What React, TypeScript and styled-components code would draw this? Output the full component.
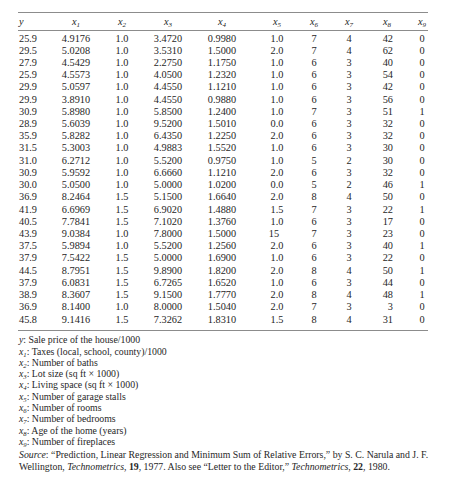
import React from "react";
import styled, { createGlobalStyle } from "styled-components";

const Global = createGlobalStyle`
  html, body { margin: 0; padding: 0; background: #ffffff; }
  body { font-family: "Liberation Serif", "Times New Roman", serif; color: #262626; }
`;

type Align = "start" | "center" | "end";
interface ColSpec { width: number; align: Align; pad?: number; }

const cols: ColSpec[] = [
  { width: 48, align: "start", pad: 1 },
  { width: 20, align: "center" },
  { width: 72, align: "center" },
  { width: 20, align: "center" },
  { width: 88, align: "center" },
  { width: 22, align: "center" },
  { width: 52, align: "center" },
  { width: 18, align: "center" },
  { width: 58, align: "end", pad: 23 },
  { width: 12, align: "center" },
];

const template = cols.map((c) => `${c.width}px`).join(" ");

const rows: string[][] = [
  ["25.9", "4.9176", "1.0", "3.4720", "0.9980", "1.0", "7", "4", "42", "0"],
  ["29.5", "5.0208", "1.0", "3.5310", "1.5000", "2.0", "7", "4", "62", "0"],
  ["27.9", "4.5429", "1.0", "2.2750", "1.1750", "1.0", "6", "3", "40", "0"],
  ["25.9", "4.5573", "1.0", "4.0500", "1.2320", "1.0", "6", "3", "54", "0"],
  ["29.9", "5.0597", "1.0", "4.4550", "1.1210", "1.0", "6", "3", "42", "0"],
  ["29.9", "3.8910", "1.0", "4.4550", "0.9880", "1.0", "6", "3", "56", "0"],
  ["30.9", "5.8980", "1.0", "5.8500", "1.2400", "1.0", "7", "3", "51", "1"],
  ["28.9", "5.6039", "1.0", "9.5200", "1.5010", "0.0", "6", "3", "32", "0"],
  ["35.9", "5.8282", "1.0", "6.4350", "1.2250", "2.0", "6", "3", "32", "0"],
  ["31.5", "5.3003", "1.0", "4.9883", "1.5520", "1.0", "6", "3", "30", "0"],
  ["31.0", "6.2712", "1.0", "5.5200", "0.9750", "1.0", "5", "2", "30", "0"],
  ["30.9", "5.9592", "1.0", "6.6660", "1.1210", "2.0", "6", "3", "32", "0"],
  ["30.0", "5.0500", "1.0", "5.0000", "1.0200", "0.0", "5", "2", "46", "1"],
  ["36.9", "8.2464", "1.5", "5.1500", "1.6640", "2.0", "8", "4", "50", "0"],
  ["41.9", "6.6969", "1.5", "6.9020", "1.4880", "1.5", "7", "3", "22", "1"],
  ["40.5", "7.7841", "1.5", "7.1020", "1.3760", "1.0", "6", "3", "17", "0"],
  ["43.9", "9.0384", "1.0", "7.8000", "1.5000", "15", "7", "3", "23", "0"],
  ["37.5", "5.9894", "1.0", "5.5200", "1.2560", "2.0", "6", "3", "40", "1"],
  ["37.9", "7.5422", "1.5", "5.0000", "1.6900", "1.0", "6", "3", "22", "0"],
  ["44.5", "8.7951", "1.5", "9.8900", "1.8200", "2.0", "8", "4", "50", "1"],
  ["37.9", "6.0831", "1.5", "6.7265", "1.6520", "1.0", "6", "3", "44", "0"],
  ["38.9", "8.3607", "1.5", "9.1500", "1.7770", "2.0", "8", "4", "48", "1"],
  ["36.9", "8.1400", "1.0", "8.0000", "1.5040", "2.0", "7", "3", "3", "0"],
  ["45.8", "9.1416", "1.5", "7.3262", "1.8310", "1.5", "8", "4", "31", "0"],
];

const legend: { v: string; sub?: string; text: string }[] = [
  { v: "y", text: "Sale price of the house/1000" },
  { v: "x", sub: "1", text: "Taxes (local, school, county)/1000" },
  { v: "x", sub: "2", text: "Number of baths" },
  { v: "x", sub: "3", text: "Lot size (sq ft \u00d7 1000)" },
  { v: "x", sub: "4", text: "Living space (sq ft \u00d7 1000)" },
  { v: "x", sub: "5", text: "Number of garage stalls" },
  { v: "x", sub: "6", text: "Number of rooms" },
  { v: "x", sub: "7", text: "Number of bedrooms" },
  { v: "x", sub: "8", text: "Age of the home (years)" },
  { v: "x", sub: "9", text: "Number of fireplaces" },
];

const Page = styled.div`
  padding: 12px 0 0 18px;
  width: 410px;
`;

const Table = styled.div`
  width: 410px;
  border-top: 1.5px solid #8c8c8c;
  border-bottom: 1.5px solid #8c8c8c;
`;

const HeaderRow = styled.div`
  display: grid;
  grid-template-columns: ${template};
  height: 17px;
  align-items: center;
  border-bottom: 1.5px solid #8c8c8c;
  font-size: 10.3px;
  font-style: italic;
`;

const Body = styled.div`
  padding: 1.5px 0 4.5px;
`;

const Row = styled.div`
  display: grid;
  grid-template-columns: ${template};
  height: 12.22px;
  line-height: 12.22px;
  font-size: 10.3px;
`;

const Cell = styled.div<{ $align: Align; $pad?: number; $nudge?: number }>`
  display: flex;
  min-width: 0;
  white-space: nowrap;
  justify-content: ${(p) =>
    p.$align === "start" ? "flex-start" : p.$align === "end" ? "flex-end" : "center"};
  padding-left: ${(p) => (p.$align === "start" ? p.$pad ?? 0 : 0)}px;
  padding-right: ${(p) => (p.$align === "end" ? p.$pad ?? 0 : 0)}px;
  margin-left: ${(p) => p.$nudge ?? 0}px;
`;

const Sub = styled.sub`
  font-size: 0.68em;
  vertical-align: -0.3em;
  line-height: 0;
  font-style: italic;
`;

const Var = styled.span`
  font-style: italic;
`;

const Legend = styled.div`
  padding-top: 3px;
  padding-left: 1px;
  font-size: 9.8px;
  line-height: 11.3px;
`;

const LegendLine = styled.div`
  white-space: nowrap;
`;

const Source = styled.div`
  margin-top: 1.8px;
  font-size: 9.8px;
  line-height: 11.6px;
  padding-left: 1px;
  width: 409px;
`;

const SourceLine = styled.div<{ $justify?: boolean }>`
  text-align: ${(p) => (p.$justify ? "justify" : "left")};
  text-align-last: ${(p) => (p.$justify ? "justify" : "left")};
  white-space: nowrap;
`;

const Bold = styled.b`
  font-weight: bold;
`;

export default function App() {
  return (
    <>
      <Global />
      <Page>
        <Table>
          <HeaderRow>
            {cols.map((c, i) => (
              <Cell key={i} $align={c.align === "end" ? "center" : c.align} $pad={c.pad}>
                {i === 0 ? (
                  "y"
                ) : (
                  <span>
                    x<Sub>{i}</Sub>
                  </span>
                )}
              </Cell>
            ))}
          </HeaderRow>
          <Body>
            {rows.map((r, ri) => (
              <Row key={ri}>
                {r.map((v, ci) => (
                  <Cell
                    key={ci}
                    $align={cols[ci].align}
                    $pad={cols[ci].pad}
                    $nudge={ci === 5 && v === "15" ? -6 : 0}
                  >
                    {v}
                  </Cell>
                ))}
              </Row>
            ))}
          </Body>
        </Table>
        <Legend>
          {legend.map((l, i) => (
            <LegendLine key={i}>
              <Var>{l.v}</Var>
              {l.sub && <Sub>{l.sub}</Sub>}: {l.text}
            </LegendLine>
          ))}
        </Legend>
        <Source>
          <SourceLine $justify>
            <Var>Source</Var>: {"\u201c"}Prediction, Linear Regression and Minimum Sum of Relative Errors,{"\u201d"} by S. C. Narula and J. F.
          </SourceLine>
          <SourceLine>
            Wellington, <Var>Technometrics</Var>, <Bold>19</Bold>, 1977. Also see {"\u201c"}Letter to the Editor,{"\u201d"} <Var>Technometrics</Var>, <Bold>22</Bold>, 1980.
          </SourceLine>
        </Source>
      </Page>
    </>
  );
}
